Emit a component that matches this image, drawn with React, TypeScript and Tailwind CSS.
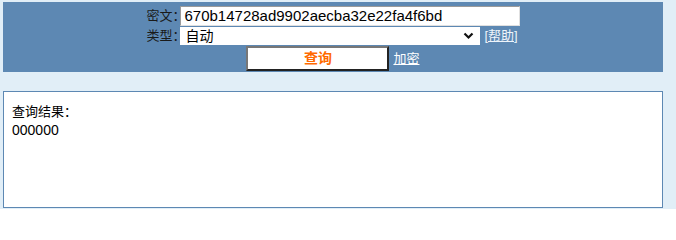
import React from "react";

export default function App() {
  const font = { fontFamily: '"Liberation Sans", Arial, "Noto Sans CJK SC", sans-serif' };
  return (
    <div className="w-[676px] h-[209px] bg-[#e1eef7] pt-[2px] pl-[3px]" style={font}>
      <div className="w-[660px] h-[70px] bg-[#5d88b3] flex flex-col items-center pt-[3px]">
        <div className="flex items-center h-[21px]">
          <span className="text-[13px] text-[#1a1a1a] w-[33px] whitespace-nowrap">密文：</span>
          <div className="w-[340px] h-[20px] bg-white border border-[#9a9a9a] border-r-[#e0e0e0] border-b-[#e0e0e0] flex items-center pl-[4px] text-[15px] text-black leading-none">
            670b14728ad9902aecba32e22fa4f6bd
          </div>
        </div>
        <div className="flex items-center h-[19px]">
          <span className="text-[13px] text-[#1a1a1a] w-[33px] whitespace-nowrap">类型：</span>
          <div className="w-[300px] h-[18px] bg-white flex items-center justify-between pl-[6px] pr-[6px] text-[14px] text-black leading-none">
            <span>自动</span>
            <svg width="11" height="8" viewBox="0 0 11 8">
              <path d="M1.5 1.5 L5.5 5.5 L9.5 1.5" stroke="#111" strokeWidth="2.2" fill="none" />
            </svg>
          </div>
          <span className="ml-[5px] text-[13px] text-[#eef4fa] underline w-[35px] whitespace-nowrap">[帮助]</span>
        </div>
        <div className="flex items-center mt-[1px]">
          <div className="w-[143px] h-[25px] bg-white border-2 border-t-[#777] border-l-[#777] border-r-[#222] border-b-[#222] flex items-center justify-center text-[14px] font-bold text-[#ff6a00]">
            查询
          </div>
          <span className="ml-[4px] text-[13px] text-white underline">加密</span>
        </div>
      </div>
      <div className="mt-[19px] w-[660px] h-[117px] bg-white border border-[#5d88b3] pl-[8px] pt-[11px] text-[13px] text-black leading-[18px]">
        <div>查询结果：</div>
        <div className="text-[14px]">000000</div>
      </div>
    </div>
  );
}
